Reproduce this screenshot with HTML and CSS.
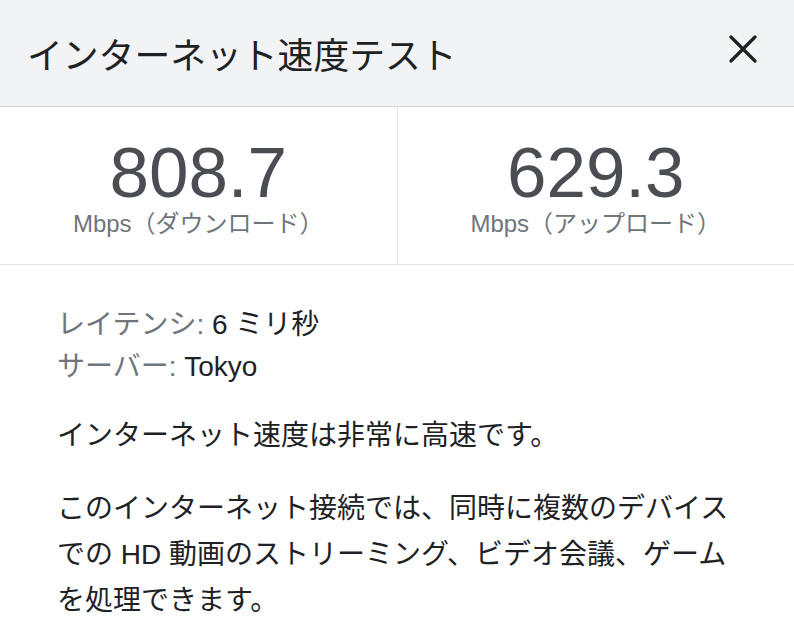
FILE: index.html
```html
<!DOCTYPE html>
<html lang="ja">
<head>
<meta charset="utf-8">
<title>インターネット速度テスト</title>
<link rel="stylesheet" href="styles.css">
</head>
<body>
<div class="card">
  <header class="head">
    <h1 class="title">インターネット速度テスト</h1>
    <button class="close" aria-label="閉じる">
      <svg width="30" height="28" viewBox="0 0 30 28"><path d="M3 2 L27 26 M27 2 L3 26" stroke="#202124" stroke-width="3.2" stroke-linecap="round" fill="none"/></svg>
    </button>
  </header>
  <section class="stats">
    <div class="stat">
      <div class="num">808.7</div>
      <div class="unit">Mbps（ダウンロード）</div>
    </div>
    <div class="stat">
      <div class="num">629.3</div>
      <div class="unit">Mbps（アップロード）</div>
    </div>
  </section>
  <section class="info">
    <div class="meta">
      <div><span class="label">レイテンシ:</span> 6 ミリ秒</div>
      <div><span class="label">サーバー:</span> Tokyo</div>
    </div>
    <p class="text">インターネット速度は非常に高速です。</p>
    <p class="text">このインターネット接続では、同時に複数のデバイスでの HD 動画のストリーミング、ビデオ会議、ゲームを処理できます。</p>
  </section>
</div>
</body>
</html>
```
FILE: styles.css
```css
* { box-sizing: border-box; }
html, body { margin: 0; padding: 0; background: #ffffff; }
body {
  font-family: "Liberation Sans", Arial, "Noto Sans CJK JP", sans-serif;
  color: #202124;
}
.card { width: 794px; }
.head {
  height: 107px;
  background: #f1f3f4;
  border-bottom: 1px solid #d4d6d9;
  display: flex;
  align-items: center;
  justify-content: space-between;
  padding: 10px 36px 0 27px;
}
.title {
  margin: 0;
  font-size: 35.8px;
  font-weight: 400;
  color: #202124;
  line-height: 1;
}
.close {
  border: 0;
  background: transparent;
  padding: 0;
  margin-top: -18px;
  display: flex;
}
.stats {
  display: flex;
  border-bottom: 1px solid #e3e5e8;
}
.stat {
  flex: 1;
  display: flex;
  flex-direction: column;
  align-items: center;
  padding: 36px 0 25px;
}
.stat + .stat { border-left: 1px solid #e3e5e8; }
.num {
  font-size: 71px;
  line-height: 60px;
  color: #4a4d52;
}
.unit {
  margin-top: 6px;
  font-size: 24px;
  line-height: 30px;
  color: #70757a;
}
.info {
  padding: 39px 57px 0 57px;
}
.meta {
  font-size: 28px;
  line-height: 42px;
}
.label { color: #70757a; }
.text {
  margin: 25px 0 0;
  font-size: 28px;
  line-height: 46px;
}
.text + .text { margin-top: 27px; }
```
